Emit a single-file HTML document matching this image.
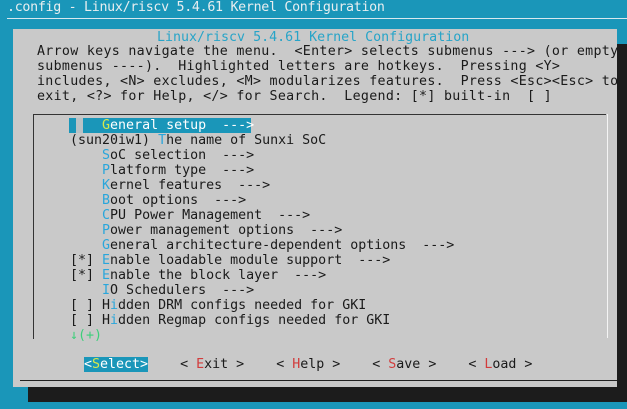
<!DOCTYPE html>
<html><head><style>
body{margin:0;width:627px;height:409px;background:#1a96b9;position:relative;overflow:hidden;font-family:"DejaVu Sans Mono","Liberation Mono",monospace;font-size:13.3px;}
pre{margin:0;font:inherit;position:absolute;line-height:15px;white-space:pre;}
.t{color:#e8eef0;left:7px;top:0px;letter-spacing:-0.3px}
.hl{position:absolute;left:7px;top:18px;width:620px;height:1px;background:#d8e8ee}
.sh{position:absolute;left:28px;top:44px;width:599px;height:358px;background:#1c1c1c}
.dlg{position:absolute;left:13px;top:29px;width:604px;height:358px;background:#c9c9c9}
.box{position:absolute;left:33px;top:114px;width:572px;height:224px;border-left:1px solid #333;border-top:1px solid #333;}
.box2{position:absolute;left:33px;top:114px;width:574px;height:224px;border-right:1px solid #f4f4f4}
.c{color:#1a1a1a}
.k{color:#2aa6db}
.r{color:#d23c3c}
.ttl{color:#27a4c8}
.bar{position:absolute;left:69px;top:118px;width:182px;height:15px;background:#1a96b9}
.cur{position:absolute;left:76px;top:118px;width:7px;height:15px;background:#b9c2c6}
.sel{position:absolute;left:84px;top:357px;width:64px;height:15px;background:#1a96b9}
.bl{position:absolute;left:20px;top:380px;width:597px;height:1px;background:#222}
</style></head><body>
<pre class="t">.config - Linux/riscv 5.4.61 Kernel Configuration</pre>
<div class="hl"></div>
<div class="sh"></div>
<div class="dlg"></div>
<pre class="ttl" style="left:157px;top:30px">Linux/riscv 5.4.61 Kernel Configuration</pre>
<pre class="c" style="left:37px;top:44px;letter-spacing:0.3px">Arrow keys navigate the menu.  &lt;Enter&gt; selects submenus ---&gt; (or empty
submenus ----).  Highlighted letters are hotkeys.  Pressing &lt;Y&gt;
includes, &lt;N&gt; excludes, &lt;M&gt; modularizes features.  Press &lt;Esc&gt;&lt;Esc&gt; to
exit, &lt;?&gt; for Help, &lt;/&gt; for Search.  Legend: [*] built-in  [ ]</pre>
<div class="box"></div><div class="box2"></div>
<div class="bar"></div><div class="cur"></div>
<pre class="c" style="left:70px;top:118px"><span style="color:#fff">    <span style="color:#d6e84a">G</span>eneral setup  ---&gt;</span>
(sun20iw1) <span class="k">T</span>he name of Sunxi SoC
    <span class="k">S</span>oC selection  ---&gt;
    <span class="k">P</span>latform type  ---&gt;
    <span class="k">K</span>ernel features  ---&gt;
    <span class="k">B</span>oot options  ---&gt;
    <span class="k">C</span>PU Power Management  ---&gt;
    <span class="k">P</span>ower management options  ---&gt;
    <span class="k">G</span>eneral architecture-dependent options  ---&gt;
[*] <span class="k">E</span>nable loadable module support  ---&gt;
[*] <span class="k">E</span>nable the block layer  ---&gt;
    <span class="k">I</span>O Schedulers  ---&gt;
[ ] H<span class="k">i</span>dden DRM configs needed for GKI
[ ] H<span class="k">i</span>dden Regmap configs needed for GKI
<span style="color:#3ccf7a">↓(+)</span></pre>
<div class="sel"></div>
<pre class="c" style="left:84px;top:357px"><span style="color:#fff">&lt;<span style="color:#d6e84a">S</span>elect&gt;</span>    &lt; <span class="r">E</span>xit &gt;    &lt; <span class="r">H</span>elp &gt;    &lt; <span class="r">S</span>ave &gt;    &lt; <span class="r">L</span>oad &gt;</pre>
<div class="bl"></div>
</body></html>
